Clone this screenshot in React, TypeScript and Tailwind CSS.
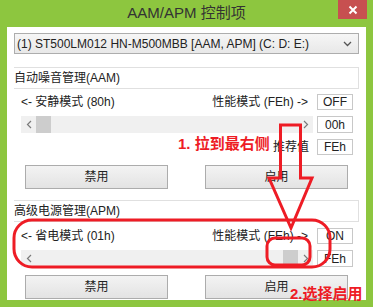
import React from 'react';

const font = { fontFamily: '"Liberation Sans", "Noto Sans CJK SC", sans-serif' };

const ValueBox = ({ text, h = 'h-[16px]' }: { text: string; h?: string }) => (
  <div className={`w-[36px] ${h} border border-[#c8c8c8] bg-white flex items-center justify-center text-[12px] text-[#222]`}>
    {text}
  </div>
);

const ScrollBar = ({ thumbAtEnd }: { thumbAtEnd?: boolean }) => (
  <div className="w-[292px] h-[17px] bg-[#f0f0f0] flex items-center text-[#777]">
    <div className="w-[15px] h-full flex items-center justify-center">
      <svg width="6" height="9" viewBox="0 0 6 9">
        <path d="M5 1 L1.5 4.5 L5 8" fill="none" stroke="#7a7a7a" strokeWidth="1.2" />
      </svg>
    </div>
    <div className="flex-1 h-full flex" style={{ justifyContent: thumbAtEnd ? 'flex-end' : 'flex-start' }}>
      <div className="w-[15px] h-full bg-[#cdcdcd]" />
    </div>
    <div className="w-[15px] h-full flex items-center justify-center">
      <svg width="6" height="9" viewBox="0 0 6 9">
        <path d="M1 1 L4.5 4.5 L1 8" fill="none" stroke="#7a7a7a" strokeWidth="1.2" />
      </svg>
    </div>
  </div>
);

const Button = ({ text }: { text: string }) => (
  <div className="w-[143px] h-[24px] border border-[#acacac] bg-gradient-to-b from-[#f3f3f3] to-[#e3e3e3] flex items-center justify-center text-[12px] text-[#222]">
    {text}
  </div>
);

const Header = ({ text }: { text: string }) => (
  <div className="h-[22px] border border-[#e0e0e0] border-l-0 flex items-center text-[12px] text-[#222]">
    {text}
  </div>
);

export default function App() {
  return (
    <div className="relative w-[373px] h-[307px] bg-[#8dc63f] overflow-hidden" style={font}>
      {/* title bar */}
      <div className="h-[27px] flex items-center justify-center relative">
        <span className="text-[15px] text-[#333]">AAM/APM 控制项</span>
        <div className="absolute right-[6px] top-0 w-[29px] h-[19px] bg-[#c75050] flex items-center justify-center">
          <svg width="10" height="10" viewBox="0 0 10 10">
            <path d="M1.5 1.5 L8.5 8.5 M8.5 1.5 L1.5 8.5" stroke="#fff" strokeWidth="2" />
          </svg>
        </div>
      </div>

      {/* client area */}
      <div className="mx-[7px] h-[273px] bg-white px-[7px] pt-[6px] flex flex-col">
        <div className="h-[21px] border border-[#adadad] bg-gradient-to-b from-[#f6f6f6] to-[#e8e8e8] flex items-center justify-between pl-[2px] pr-[6px] text-[12px] text-[#222]">
          <span>(1) ST500LM012 HN-M500MBB [AAM, APM] (C: D: E:)</span>
          <svg width="9" height="6" viewBox="0 0 9 6">
            <path d="M1 1 L4.5 4.5 L8 1" fill="none" stroke="#555" strokeWidth="1.3" />
          </svg>
        </div>

        {/* AAM */}
        <div className="mt-[13px]">
          <Header text="自动噪音管理(AAM)" />
        </div>
        <div className="pl-[7px] flex flex-col">
          <div className="mt-[4px] flex gap-[4px] items-center">
            <div className="w-[292px] flex justify-between text-[12px] text-[#222] pr-[5px]">
              <span>&lt;- 安静模式 (80h)</span>
              <span>性能模式 (FEh) -&gt;</span>
            </div>
            <ValueBox text="OFF" />
          </div>
          <div className="mt-[5px] flex gap-[4px] items-center">
            <ScrollBar />
            <ValueBox text="00h" h="h-[17px]" />
          </div>
          <div className="mt-[5px] flex gap-[4px] items-center">
            <div className="w-[292px] flex justify-end text-[12px] text-[#222] pr-[4px]">推荐值</div>
            <ValueBox text="FEh" />
          </div>
          <div className="mt-[9px] flex gap-[37px] pl-[4px]">
            <Button text="禁用" />
            <Button text="启用" />
          </div>
        </div>

        {/* APM */}
        <div className="mt-[11px]">
          <Header text="高级电源管理(APM)" />
        </div>
        <div className="pl-[7px] flex flex-col">
          <div className="mt-[5px] flex gap-[4px] items-center">
            <div className="w-[292px] flex justify-between text-[12px] text-[#222] pr-[5px]">
              <span>&lt;- 省电模式 (01h)</span>
              <span>性能模式 (FEh) -&gt;</span>
            </div>
            <ValueBox text="ON" />
          </div>
          <div className="mt-[5px] flex gap-[4px] items-center">
            <ScrollBar thumbAtEnd />
            <ValueBox text="FEh" h="h-[17px]" />
          </div>
          <div className="mt-[8px] flex gap-[37px] pl-[4px]">
            <Button text="禁用" />
            <Button text="启用" />
          </div>
        </div>
      </div>

      {/* annotations */}
      <svg className="absolute inset-0 pointer-events-none" width="373" height="307" viewBox="0 0 373 307">
        <path
          d="M280.5 125 L300.5 125 L300.5 178 L312 178 L291 228 L269 178 L280.5 178 Z"
          fill="none"
          stroke="#ee1c25"
          strokeWidth="3"
          strokeLinejoin="miter"
        />
        <rect x="14" y="220" width="316" height="47" rx="18" fill="none" stroke="#ee1c25" strokeWidth="3" />
        <rect x="267" y="238" width="43" height="27" rx="8" fill="none" stroke="#ee1c25" strokeWidth="3" />
      </svg>
      <div className="absolute left-[178px] top-[135px] text-[15px] font-bold text-[#ee1c25] leading-[18px]">
        1. 拉到最右侧
      </div>
      <div className="absolute left-[290px] top-[285px] text-[15px] font-bold text-[#ee1c25] leading-[18px]">
        2.选择启用
      </div>
    </div>
  );
}
